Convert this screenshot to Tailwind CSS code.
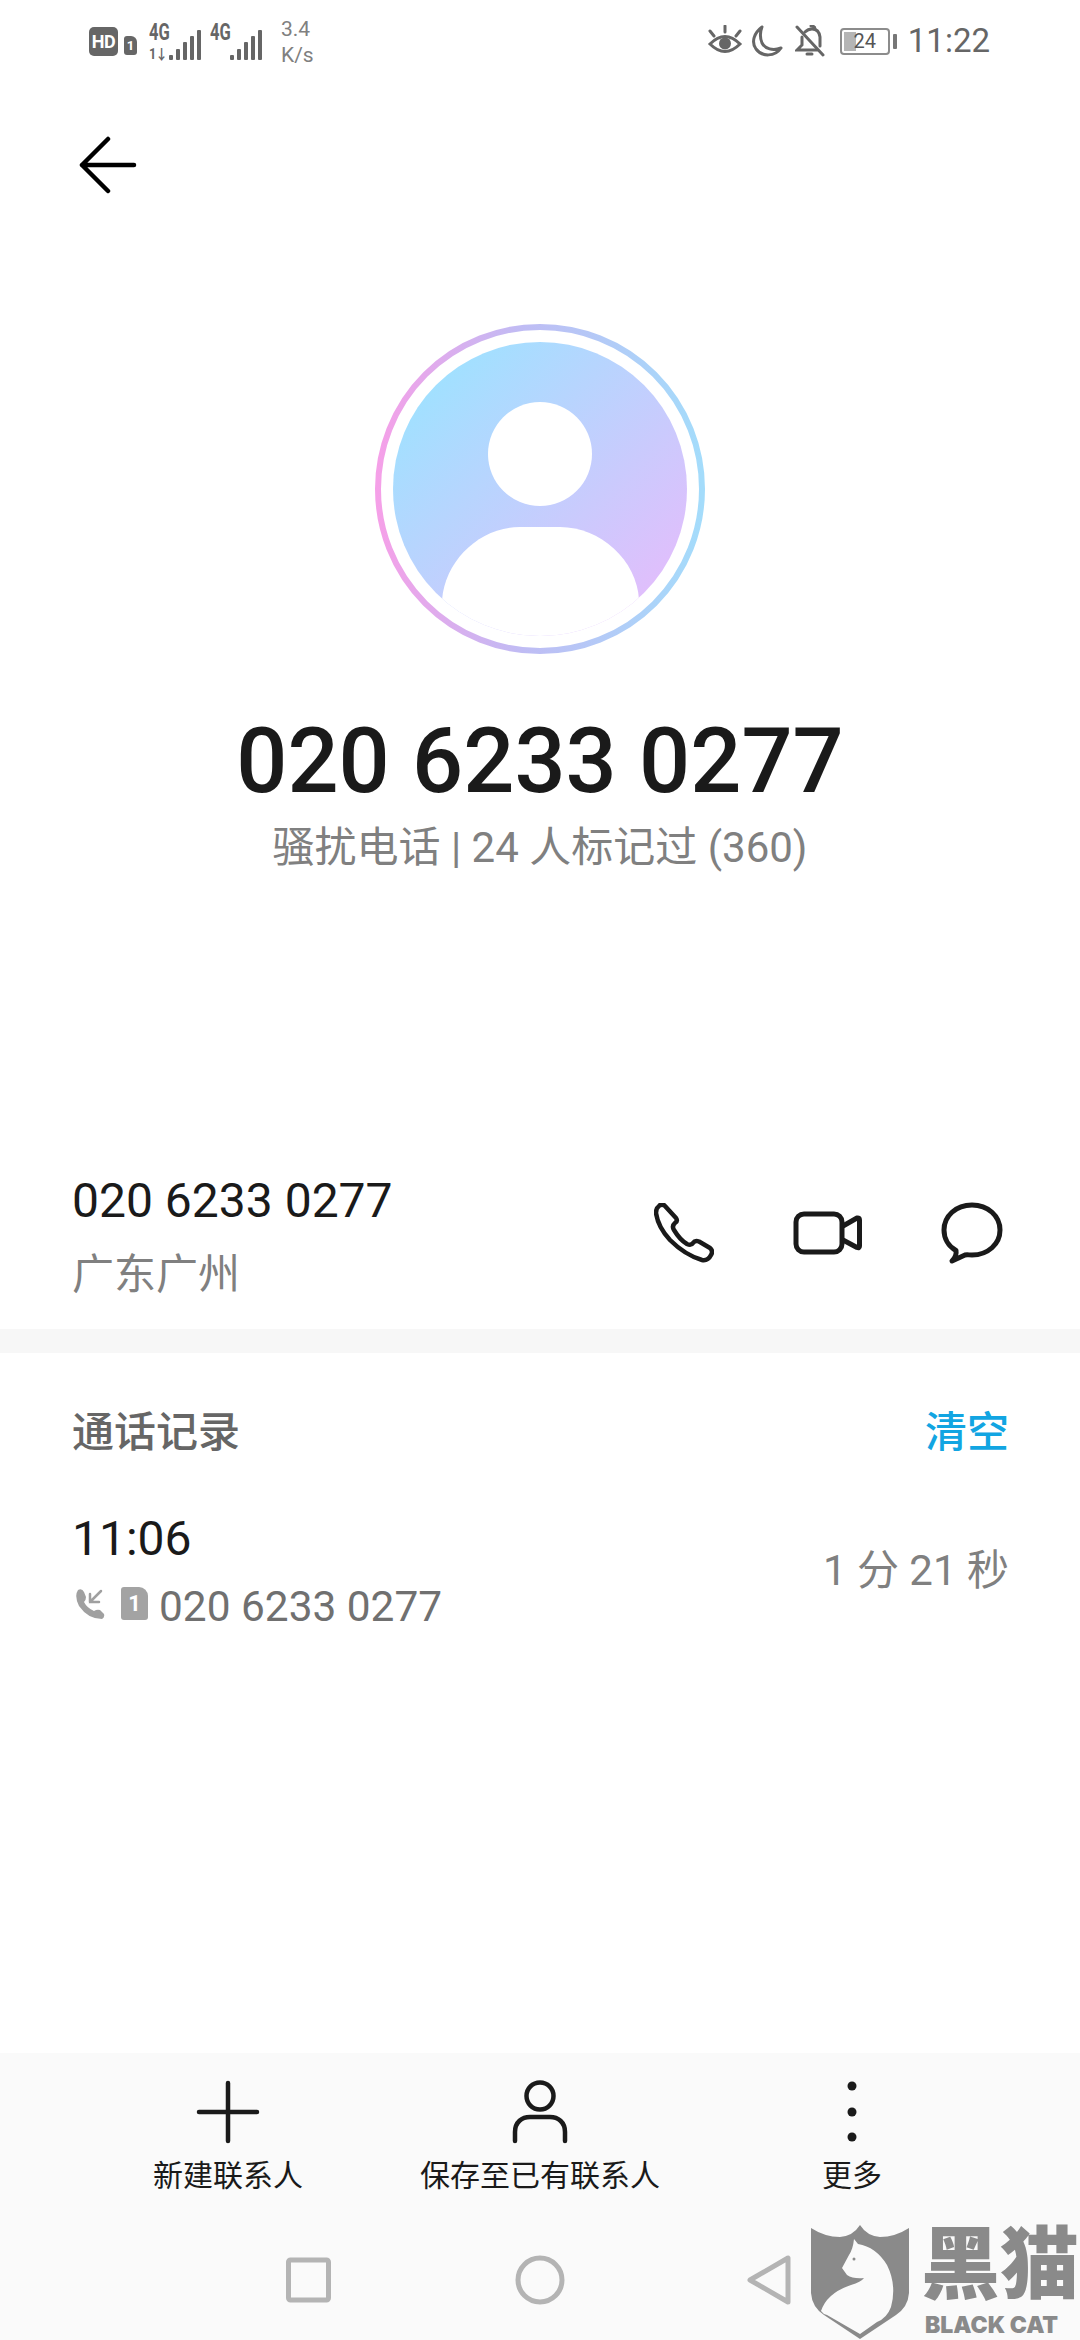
<!DOCTYPE html>
<html lang="zh-CN">
<head>
    <meta charset="UTF-8">
    <meta name="viewport" content="width=device-width, initial-scale=1.0">
    <title>通话详情</title>
    <script src="https://cdn.jsdelivr.net/npm/@tailwindcss/browser@4"></script>
</head>
<body class="bg-white font-['Roboto','Noto_Sans_CJK_SC',sans-serif]">
<div class="relative w-[1080px] h-[2340px] overflow-hidden flex flex-col bg-white">

    <!-- status bar -->
    <div class="h-[82px] shrink-0 flex items-center justify-between pl-[89px] pr-[90px] text-[#6b6b6b]">
        <div class="flex items-center">
            <div class="w-[29px] h-[29px] mt-[1px] rounded-[5px] bg-[#666] text-white text-[18px] font-bold leading-[29px] text-center tracking-[-0.5px]">HD</div>
            <div class="w-[13px] h-[19px] ml-[6px] mt-[9px] rounded-[3px] rounded-tr-[6px] bg-[#666] text-white text-[13px] font-bold leading-[19px] text-center">1</div>
            <div class="relative w-[52px] h-[32px] ml-[12px] mt-[8px]">
                <span class="absolute left-0 top-[-8px] text-[23px] leading-[24px] font-bold scale-x-[.72] origin-left text-[#666]">4G</span>
                <span class="absolute left-0 top-[18px] text-[14px] leading-[14px] font-bold tracking-[-1px] scale-x-90 origin-left text-[#666]">1↓</span>
                <div class="absolute right-0 bottom-[1px] flex items-end gap-[3px]">
                    <div class="w-[4px] h-[5px] rounded-[1px] bg-[#666]"></div>
                    <div class="w-[4px] h-[11px] rounded-[1px] bg-[#666]"></div>
                    <div class="w-[4px] h-[18px] rounded-[1px] bg-[#666]"></div>
                    <div class="w-[4px] h-[24px] rounded-[1px] bg-[#666]"></div>
                    <div class="w-[4px] h-[30px] rounded-[1px] bg-[#666]"></div>
                </div>
            </div>
            <div class="relative w-[52px] h-[32px] ml-[9px] mt-[8px]">
                <span class="absolute left-0 top-[-8px] text-[23px] leading-[24px] font-bold scale-x-[.72] origin-left text-[#666]">4G</span>
                <div class="absolute right-0 bottom-[1px] flex items-end gap-[3px]">
                    <div class="w-[4px] h-[5px] rounded-[1px] bg-[#666]"></div>
                    <div class="w-[4px] h-[11px] rounded-[1px] bg-[#666]"></div>
                    <div class="w-[4px] h-[18px] rounded-[1px] bg-[#666]"></div>
                    <div class="w-[4px] h-[24px] rounded-[1px] bg-[#666]"></div>
                    <div class="w-[4px] h-[30px] rounded-[1px] bg-[#666]"></div>
                </div>
            </div>
            <div class="ml-[19px] text-[21px] leading-[26px] text-[#808080] mt-[1px]">3.4<br>K/s</div>
        </div>
        <div class="flex items-center">
            <svg class="w-[36px] h-[32px]" viewBox="0 0 36 32" fill="none" stroke="#666" stroke-width="3" stroke-linecap="round">
                <path d="M3 19 Q18 4 33 19 Q18 34 3 19Z"/>
                <circle cx="18" cy="18.5" r="6" fill="#666" stroke="none"/>
                <path d="M3 6 L7 11 M18 1 V7 M33 6 L29 11"/>
            </svg>
            <svg class="w-[32px] h-[32px] ml-[8px]" viewBox="0 0 32 32" fill="none" stroke="#666" stroke-width="3" stroke-linejoin="round">
                <path d="M11 2 C3 8 0 17 5 24 C11 32 24 32 30 23 C22 26 14 24 11 18 C9 13 9 7 11 2Z"/>
            </svg>
            <svg class="w-[32px] h-[32px] ml-[12px]" viewBox="0 0 32 32" fill="none" stroke="#666" stroke-width="3" stroke-linecap="round">
                <path d="M10 7 Q13 4 17 4 Q24 4 25 12 V21 M7 12 V20 L2 25 H22"/>
                <path d="M16 1 Q20 1 20 4 M12 29 H17 M2 2 L28 30"/>
            </svg>
            <div class="relative w-[50px] h-[27px] ml-[13px] rounded-[4px] border-2 border-[#8c8c8c] overflow-hidden">
                <div class="absolute left-[2px] top-[2px] bottom-[2px] w-[12px] bg-[#b5b5b5]"></div>
                <div class="absolute inset-0 text-center text-[20px] leading-[23px] text-[#555]">24</div>
            </div>
            <div class="w-[4px] h-[15px] ml-[3px] rounded-[1px] bg-[#777]"></div>
            <div class="ml-[11px] text-[33px] leading-[40px] text-[#666]">11:22</div>
        </div>
    </div>

    <!-- back -->
    <div class="h-[166px] shrink-0 flex items-center pl-[79px]">
        <svg class="w-[58px] h-[58px]" viewBox="0 0 58 58" fill="none" stroke="#000" stroke-width="4.5" stroke-linecap="round" stroke-linejoin="round">
            <path d="M3 29 H55 M29 3 L3 29 L29 55"/>
        </svg>
    </div>

    <!-- avatar -->
    <div class="mt-[76px] flex justify-center shrink-0">
        <svg class="w-[330px] h-[330px]" viewBox="0 0 330 330">
            <defs>
                <linearGradient id="ringGrad" x1="0" y1="0" x2="1" y2="0">
                    <stop offset="0" stop-color="#f5a0e8"/>
                    <stop offset="0.45" stop-color="#bfbcf4"/>
                    <stop offset="1" stop-color="#a4dcfb"/>
                </linearGradient>
                <linearGradient id="faceGrad" x1="0.15" y1="0.15" x2="0.85" y2="0.85">
                    <stop offset="0" stop-color="#a2e0ff"/>
                    <stop offset="1" stop-color="#dfbffc"/>
                </linearGradient>
                <clipPath id="faceClip"><circle cx="165" cy="165" r="147"/></clipPath>
            </defs>
            <circle cx="165" cy="165" r="162" fill="none" stroke="url(#ringGrad)" stroke-width="6"/>
            <circle cx="165" cy="165" r="147" fill="url(#faceGrad)"/>
            <circle cx="165" cy="130" r="52" fill="#fff"/>
            <path clip-path="url(#faceClip)" d="M67 276 C70 236 105 203 145 203 H185 C225 203 262 236 264 276 V340 H67Z" fill="#fff"/>
        </svg>
    </div>

    <!-- number -->
    <div class="mt-[58px] text-center text-[90px] leading-[100px] font-medium text-[#1a1a1a] shrink-0">020 6233 0277</div>
    <div class="mt-[8px] text-center text-[42px] leading-[56px] text-[#808080] shrink-0">骚扰电话 | 24 人标记过 (360)</div>

    <!-- contact row -->
    <div class="mt-[295px] h-[158px] shrink-0 flex justify-between pl-[72px] pr-[76px]">
        <div>
            <div class="text-[48px] leading-[60px] text-[#1a1a1a]">020 6233 0277</div>
            <div class="mt-[16px] text-[42px] leading-[56px] text-[#808080]">广东广州</div>
        </div>
        <div class="flex items-start pt-[32px]">
            <svg class="w-[60px] h-[60px]" viewBox="0 0 60 60" fill="none" stroke="#1a1a1a" stroke-width="4.5" stroke-linejoin="round">
                <path d="M5 3 Q8 0 11 3 L22 15 Q24 18 21 20 Q17.5 23 20 27 Q26 37 33 41 Q37 43 39 40 Q41 37 45 38.5 L56 45 Q59.5 48 57 52 Q54 58 48 57 Q31 52 16 37 Q4 24 2 10 Q2 5 5 3Z"/>
            </svg>
            <svg class="w-[70px] h-[44px] ml-[79px] mt-[8px]" viewBox="0 0 70 44" fill="none" stroke="#1a1a1a" stroke-width="5" stroke-linejoin="round">
                <rect x="3" y="3" width="46" height="38" rx="8"/>
                <path d="M50 15 L64 7 Q66.5 6.5 66.5 9 V35 Q66.5 37.5 64 36.5 L50 29"/>
            </svg>
            <svg class="w-[64px] h-[66px] ml-[77px] -mt-[3px]" viewBox="0 0 64 66" fill="none" stroke="#1a1a1a" stroke-width="5" stroke-linejoin="round">
                <path d="M16 50.5 C8 46 4 38 4 30 C4 16 16 5 32 5 C48 5 60 16 60 30 C60 44 48 55 32 55 C29 55 27 54.5 25 55 L12 61 Q17 56 16 50.5Z"/>
            </svg>
        </div>
    </div>

    <div class="h-[24px] shrink-0 bg-[#f7f7f7]"></div>

    <!-- call log -->
    <div class="pt-[52px] pl-[72px] pr-[71px] shrink-0">
        <div class="flex justify-between text-[42px] leading-[56px]">
            <span class="text-[#666] font-medium">通话记录</span>
            <span class="text-[#12a5e2] font-medium">清空</span>
        </div>
        <div class="mt-[48px] flex items-center justify-between">
            <div>
                <div class="text-[48px] leading-[60px] text-[#1a1a1a]">11:06</div>
                <div class="mt-[13px] flex items-center h-[50px] text-[42.4px] leading-[50px] text-[#707070]">
                    <svg class="w-[30px] h-[32px] ml-[3px] -mt-[6px]" viewBox="0 0 30 32" fill="none">
                        <path d="M3 2 Q7 0 9 4 L11 9 Q11 12 9 14 Q12 20 19 23 Q22 21 25 22 L29 26 Q30 29 27 31 Q13 31 4 18 Q-1 8 3 2Z" fill="#a0a0a0"/>
                        <path d="M26 3 L15 14 M15 6 V14 H24" stroke="#a0a0a0" stroke-width="2.5" stroke-linecap="round"/>
                    </svg>
                    <div class="w-[27px] h-[33px] ml-[16px] -mt-[8px] rounded-[3px] rounded-tr-[9px] bg-[#a3a3a3] text-white text-[22px] font-bold leading-[33px] text-center">1</div>
                    <span class="ml-[11px]">020 6233 0277</span>
                </div>
            </div>
            <div class="text-[42px] leading-[56px] text-[#808080]">1 分 21 秒</div>
        </div>
    </div>

    <!-- action bar + nav -->
    <div class="mt-auto h-[287px] shrink-0 bg-[#fafafa]">
        <div class="grid grid-cols-3 px-[72px] pt-[27px] text-[30px] leading-[40px] text-[#1a1a1a]">
            <div class="flex flex-col items-center">
                <svg class="w-[64px] h-[64px]" viewBox="0 0 64 64" fill="none" stroke="#1a1a1a" stroke-width="4.5" stroke-linecap="round">
                    <path d="M32 3 V61 M3 32 H61"/>
                </svg>
                <span class="mt-[12px]">新建联系人</span>
            </div>
            <div class="flex flex-col items-center">
                <svg class="w-[64px] h-[64px]" viewBox="0 0 64 64" fill="none" stroke="#1a1a1a" stroke-width="4.5" stroke-linecap="round">
                    <circle cx="32" cy="16" r="13.5"/>
                    <path d="M7 61 V52 C7 42 14 37 22 37 H42 C50 37 57 42 57 52 V61"/>
                </svg>
                <span class="mt-[12px]">保存至已有联系人</span>
            </div>
            <div class="flex flex-col items-center">
                <svg class="w-[64px] h-[64px]" viewBox="0 0 64 64" fill="#1a1a1a">
                    <circle cx="32" cy="6" r="4.5"/>
                    <circle cx="32" cy="32" r="4.5"/>
                    <circle cx="32" cy="57" r="4.5"/>
                </svg>
                <span class="mt-[12px]">更多</span>
            </div>
        </div>
        <div class="flex pl-[283px] gap-[182px] mt-[59px]">
            <svg class="w-[50px] h-[50px]" viewBox="0 0 50 50" fill="none" stroke="#b4b4b4" stroke-width="5" stroke-linejoin="round">
                <rect x="5.5" y="5" width="40" height="40" rx="2"/>
            </svg>
            <svg class="w-[50px] h-[50px]" viewBox="0 0 50 50" fill="none" stroke="#b4b4b4" stroke-width="5">
                <circle cx="25" cy="25" r="22"/>
            </svg>
            <svg class="w-[50px] h-[50px]" viewBox="0 0 50 50" fill="none" stroke="#b4b4b4" stroke-width="5" stroke-linejoin="round">
                <path d="M3 25 L41 3 V47Z"/>
            </svg>
        </div>
    </div>

    <!-- watermark -->
    <svg class="absolute left-[811px] top-[2225px] w-[98px] h-[115px]" viewBox="0 0 98 115">
        <path d="M0 3 Q14 12 29 12 Q42 11 49 0 Q56 11 69 12 Q84 12 98 3 V68 Q97 82 85 90 L49 114 L13 90 Q1 82 0 68Z" fill="#8a8a8a"/>
        <path d="M43 14 L47 19 Q65 22 76 40 Q86 60 80 82 Q76 93 66 97 L49 109 L16 90 Q12 89 10 86 Q16 68 40 60 Q50 57 53 53 Q42 54 36 50 L31 43 L38 30 Q42 24 43 14Z" fill="#fafafa"/>
        <circle cx="43" cy="34" r="1.5" fill="#8a8a8a"/>
    </svg>
    <div class="absolute left-[921px] top-[2222px] text-[79px] leading-[88px] font-black text-[#8a8a8a] whitespace-nowrap">黑猫</div>
    <div class="absolute left-[925px] top-[2311px] text-[23px] leading-[28px] font-black text-[#8a8a8a] whitespace-nowrap font-['Inter',sans-serif]">BLACK CAT</div>
</div>
</body>
</html>
